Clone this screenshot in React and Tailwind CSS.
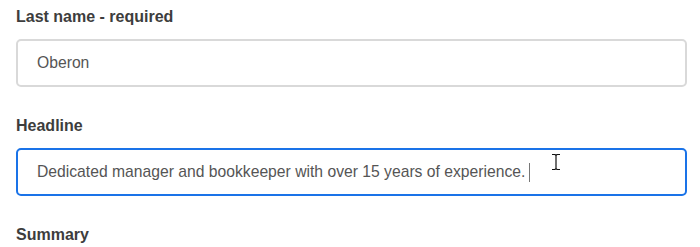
import React from 'react';

function Field({ label, value, focused }) {
  return (
    <div className="flex flex-col">
      <label className="text-[16px] leading-[20px] font-bold text-[#3d3d3d]">{label}</label>
      <div
        className={
          'relative mt-[12px] h-[48px] rounded-[5px] border-2 flex items-center pl-[19px] ' +
          (focused ? 'border-[#1a73e8]' : 'border-[#d9d9d9]')
        }
      >
        <span className="text-[15.7px] text-[#555555] whitespace-nowrap">{value}</span>
        {focused && <span className="ml-[4px] w-px h-[19px] bg-[#777777]" />}
        {focused && (
          <svg
            className="absolute left-[532px] top-[3px]"
            width="12"
            height="18"
            viewBox="0 0 12 18"
            fill="none"
          >
            <path d="M2 1.5h8M2 16.5h8M6 1.5v15" stroke="#ffffff" strokeWidth="3" />
            <path d="M2 1.5h3l1 1 1-1h3M2 16.5h3l1-1 1 1h3M6 2.5v13" stroke="#111111" strokeWidth="1.2" />
          </svg>
        )}
      </div>
    </div>
  );
}

export default function App() {
  return (
    <div
      className="w-[700px] h-[247px] bg-white overflow-hidden pt-[7px] pl-[16px] pr-[13px]"
      style={{ fontFamily: '"Liberation Sans", Arial, sans-serif' }}
    >
      <div className="flex flex-col gap-[29px]">
        <Field label="Last name - required" value="Oberon" />
        <Field
          label="Headline"
          value="Dedicated manager and bookkeeper with over 15 years of experience."
          focused
        />
        <label className="text-[16px] leading-[20px] font-bold text-[#3d3d3d]">Summary</label>
      </div>
    </div>
  );
}
